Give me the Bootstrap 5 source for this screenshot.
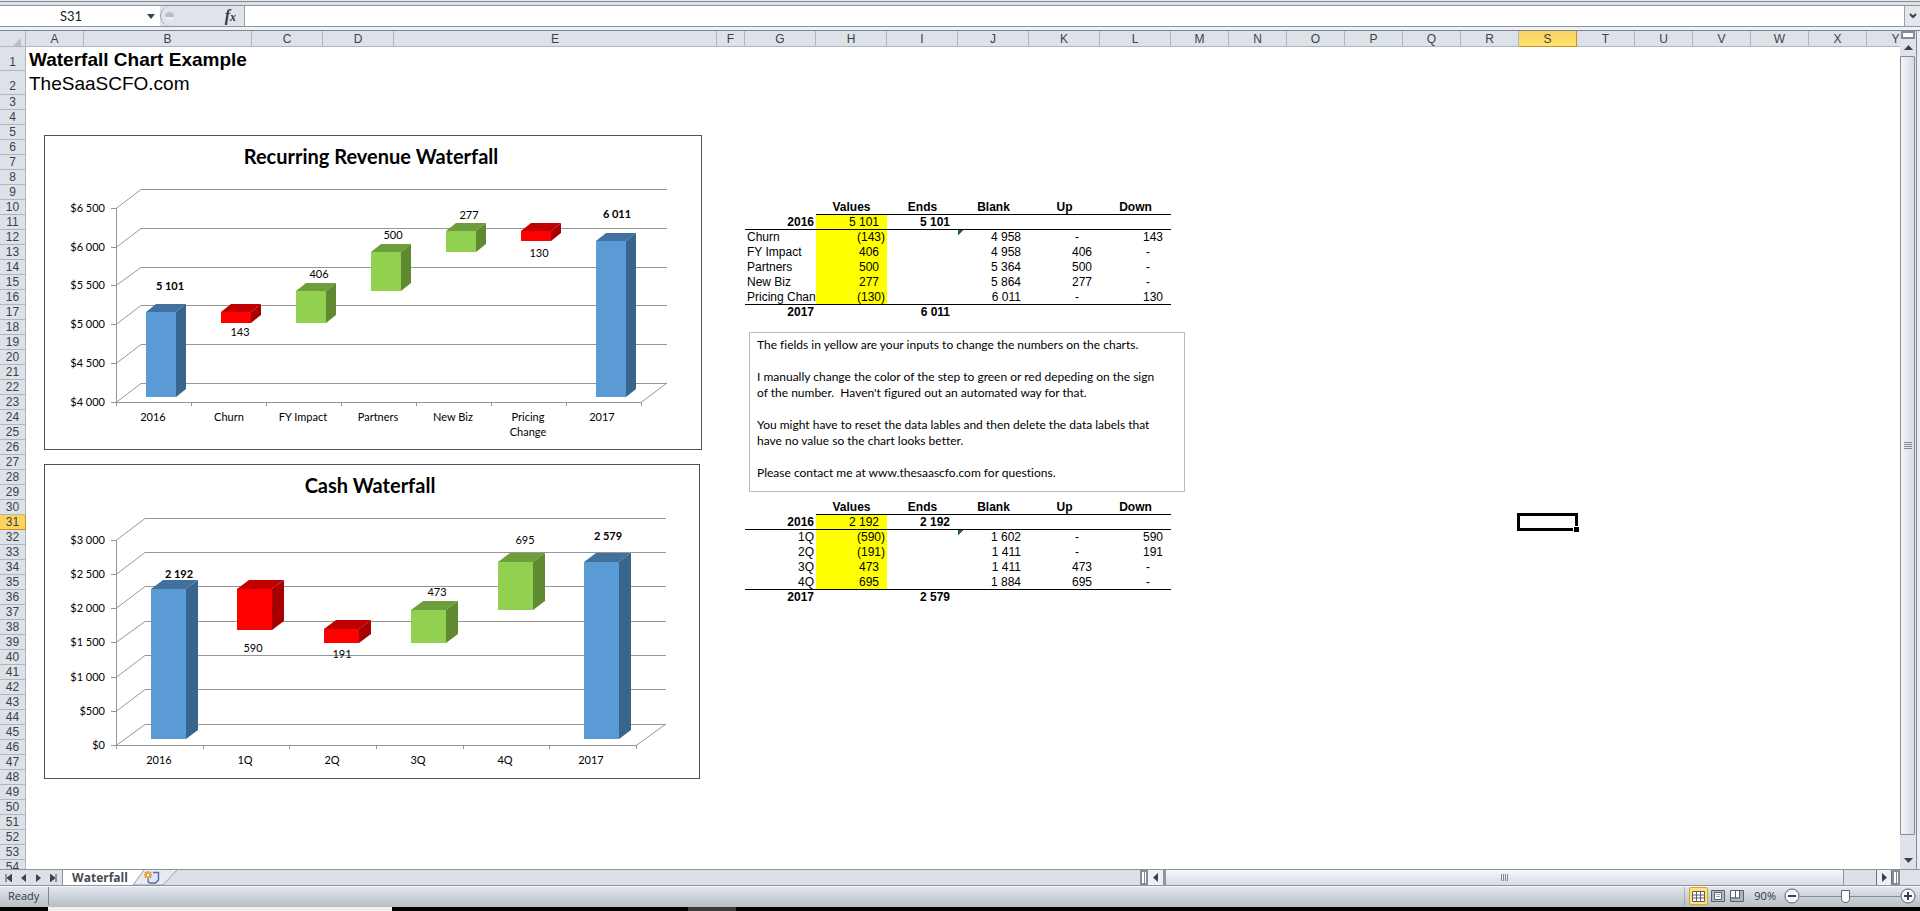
<!DOCTYPE html>
<html lang="en">
<head>
<meta charset="utf-8">
<meta name="viewport" content="width=device-width, initial-scale=1">
<title>Waterfall Chart Example</title>
<link href="https://cdn.jsdelivr.net/npm/bootstrap@5.3.0/dist/css/bootstrap.min.css" rel="stylesheet">
<style>
:root { --chrome: #dde1e8; --edge: #8d949d; --rule: #b0b6be; --ink: #3c4248; }
body { font-family: "Liberation Sans", Arial, sans-serif; font-size: 12px; line-height: 15px; color: #000; background: #fff; }
button { border: 0; padding: 0; background: none; line-height: 0; }
svg { display: block; }

/* formula bar */
.ribbon-edge { height: 6px; background: #dce0e3; border-bottom: 1px solid var(--edge); }
.ribbon-edge::before { content: ""; display: block; height: 2px; border-bottom: 1px solid #858c92; background: #e3e8ea; }
.formula-bar { height: 20px; background: var(--chrome); }
.name-wrap { width: 160px; background: #fff; }
.name-input, .formula-input { border: 0; background: #fff; height: 20px; outline: 0; font-family: Lato, sans-serif; font-size: 13px; color: #222; }
.name-input { width: 142px; text-align: center; }
.fx-cap { width: 85px; border: 1px solid #9aa1aa; border-width: 0 1px 0 1px; border-radius: 10px 0 0 10px; background: #dfe3ea; }
.fx-dot { width: 9px; height: 9px; border-radius: 50%; background: linear-gradient(#b9bec4 50%, #e9ecef 50%); }
.fx-label { font: italic bold 16px/18px "Liberation Serif", serif; color: #33383d; }
.fx-label small { font-size: 12px; }
.expand-btn { width: 16px; background: #e3e7ec; border-left: 1px solid #9aa1aa; }
.bar-gap { height: 5px; background: #eef1f5; border-top: 1px solid var(--edge); border-bottom: 1px solid #7c848e; }

/* sheet */
.sheet-area { overflow: hidden; min-height: 0; }
.sheet-view { overflow: hidden; min-width: 0; background: #fff; }
.sheet-grid { table-layout: fixed; border-collapse: separate; border-spacing: 0; width: 1925px; }
.sheet-grid th, .sheet-grid td { height: 15px; padding: 0 2px; line-height: 14px; white-space: nowrap; vertical-align: bottom; font-weight: 400; }
.sheet-grid td { border-bottom: 1px solid transparent; }
.sheet-grid thead th { height: 16px; line-height: 14px; text-align: center; background: var(--chrome); border-right: 1px solid var(--rule); border-bottom: 1px solid var(--rule); color: var(--ink); padding: 0; }
.sheet-grid tbody th { text-align: center; background: var(--chrome); border-right: 1px solid var(--rule); border-bottom: 1px solid var(--rule); color: var(--ink); padding: 0; }
.sheet-grid tr.tall > * { height: 24px; line-height: 20px; font-size: 19px; padding-left: 3px; }
.sheet-grid tr.tall > th { line-height: 16px; font-size: 12px; padding: 0; }
.sheet-grid thead th.picked { background: linear-gradient(#fbd261, #ffe56f); border-color: #c98f2a; }
.sheet-grid tbody th.picked { background: #fcd45c; border-color: #c98f2a; }
.sheet-grid td.hd { font-weight: 700; text-align: center; }
.sheet-grid td.b { font-weight: 700; }
.sheet-grid td.e { text-align: right; }
.sheet-grid td.n { text-align: right; padding-right: 8px; }
.sheet-grid td.dash { text-align: right; padding-right: 21px; }
.sheet-grid td.clip { overflow: hidden; }
.sheet-grid td.y { background: #ff0; }
.sheet-grid td.u { border-bottom-color: #000; }
.sheet-grid td.flag { background: linear-gradient(135deg, #1c6a2c 4px, transparent 4px) no-repeat; }

/* floating objects on the sheet */
.float-obj { position: absolute; background: #fff; }
.chart-one { left: 44px; top: 104px; }
.chart-two { left: 44px; top: 433px; }
.note-box { left: 749px; top: 301px; width: 436px; height: 160px; border: 1px solid #b9bcbf; padding: 4px 7px; font: 12px/16px Lato, sans-serif; font-variant-ligatures: none; white-space: pre; }
.cell-cursor { left: 1517px; top: 482px; width: 61px; height: 18px; border: 3px solid #000; background: transparent; }
.cell-cursor::after { content: ""; position: absolute; right: -5px; bottom: -5px; width: 7px; height: 7px; background: #000; border: 1px solid #fff; }
.chart text { font-family: Lato, sans-serif; font-size: 11px; fill: #000; }
.chart text.ttl { font-size: 20px; font-weight: 700; font-variant-ligatures: none; }
.chart text.strong { font-weight: 700; }

/* scroll bars */
.vscroll { width: 16px; background: #dfe3e9; }
.vscroll .split { height: 8px; margin: 0 1px; border: 2px solid #858c95; background: #fff; }
.vscroll .arrow { height: 17px; }
.vscroll .thumb { width: 15px; margin-bottom: 17px; border: 1px solid #848b94; border-radius: 1px; background: linear-gradient(90deg, #f4f6f9, #d5dae4); }
.win-edge { width: 4px; background: #e9ecf1; border-left: 1px solid #848b94; }
.tab-bar { height: 17px; background: #dce1e7; border-top: 1px solid #8d949b; border-bottom: 1px solid #8d939a; }
.tab-nav { width: 63px; border-right: 1px solid var(--edge); }
.tab-name { height: 15px; width: 70px; padding-left: 4px; background: #fff; color: #464b54; font: 700 12px/15px "Open Sans", sans-serif; text-align: center; }
.hs-btn { width: 16px; background: #eceff4; border-right: 1px solid var(--edge); }
.hs-split { width: 8px; border: 2px solid #858c95; background: linear-gradient(90deg, #fff 2px, #858c95 2px, #858c95 3px, #fff 3px); }
.hs-track { width: 712px; }
.hs-thumb { width: 680px; border: 1px solid #8d949b; border-width: 0 1px 0 2px; background: linear-gradient(#f4f6fa, #d8dde4); }
.hs-corner { width: 20px; background: #dfe3e9; }

/* status bar */
.status-bar { height: 21px; padding-bottom: 2px; border-top: 1px solid #f6f8fa; background: linear-gradient(#e2e6ee, #ccd2da 50%, #b8bfc2); color: #33383d; font: 11px/18px "Open Sans", sans-serif; }
.status-ready { width: 49px; border-right: 1px solid #7e858c; }
.view-btn { width: 19px; height: 18px; border-radius: 2px; }
.view-btn.on { background: #fde27e; border: 1px solid #d6a52c; }
.zoom-range { appearance: none; -webkit-appearance: none; width: 100px; height: 16px; margin: 0; background: linear-gradient(#848b93, #848b93) center / 100% 1px no-repeat; }
.zoom-range::-webkit-slider-thumb { -webkit-appearance: none; width: 9px; height: 13px; background: #fff; border: 1px solid #5c636b; border-radius: 1px 1px 5px 5px; }
.taskbar { height: 4px; background: #000; }
.task-a { width: 344px; margin-left: 48px; background: #efefef; }
.task-b { width: 48px; margin-left: 296px; background: #3b3b3b; }
</style>
</head>
<body class="vh-100 d-flex flex-column overflow-hidden">

<header>
  <div class="ribbon-edge"></div>
  <div class="formula-bar d-flex">
    <div class="name-wrap d-flex align-items-center">
      <input class="name-input p-0" type="text" value="S31" aria-label="Name box">
      <button type="button" class="flex-grow-1 d-flex justify-content-center" aria-label="Open name list"><svg width="8" height="5"><path d="M0 0h8L4 5z" fill="#3c4248"/></svg></button>
    </div>
    <div class="fx-cap d-flex align-items-center justify-content-between px-1">
      <span class="fx-dot"></span>
      <button type="button" class="fx-label pe-1" aria-label="Insert function">f<small>x</small></button>
    </div>
    <input class="formula-input flex-grow-1 p-0" type="text" aria-label="Formula">
    <button type="button" class="expand-btn d-flex align-items-center justify-content-center" aria-label="Expand formula bar"><svg width="8" height="6"><path d="M1 1l3 3 3-3" fill="none" stroke="#3c4248" stroke-width="2"/></svg></button>
  </div>
  <div class="bar-gap"></div>
</header>

<main class="sheet-area d-flex flex-grow-1">
  <div class="sheet-view position-relative flex-grow-1">
    <table class="sheet-grid" id="grid" aria-label="Waterfall"></table>
    <div class="float-obj chart-one"><svg class="chart" id="revenue" width="658" height="315" viewBox="44 135 658 315" role="img" aria-label="Recurring Revenue Waterfall"></svg></div>
    <div class="float-obj chart-two"><svg class="chart" id="cash" width="656" height="315" viewBox="44 464 656 315" role="img" aria-label="Cash Waterfall"></svg></div>
    <div class="float-obj note-box">The fields in yellow are your inputs to change the numbers on the charts.

I manually change the color of the step to green or red depeding on the sign
of the number.  Haven't figured out an automated way for that.

You might have to reset the data lables and then delete the data labels that
have no value so the chart looks better.

Please contact me at www.thesaascfo.com for questions.</div>
    <div class="float-obj cell-cursor"></div>
  </div>
  <div class="vscroll d-flex flex-column">
    <div class="split"></div>
    <button type="button" class="arrow d-flex align-items-center justify-content-center" aria-label="Scroll up"><svg width="9" height="5"><path d="M0 5h9L4.500 0z" fill="#3c4248"/></svg></button>
    <div class="thumb flex-grow-1 d-flex align-items-center justify-content-center"><svg width="8" height="8"><path d="M0 .5h8M0 2.500h8M0 4.500h8M0 6.500h8" stroke="#848b94"/></svg></div>
    <button type="button" class="arrow d-flex align-items-center justify-content-center" aria-label="Scroll down"><svg width="9" height="5"><path d="M0 0h9L4.500 5z" fill="#3c4248"/></svg></button>
  </div>
  <div class="win-edge"></div>
</main>

<footer>
  <div class="tab-bar d-flex">
    <div class="tab-nav d-flex align-items-center justify-content-around">
      <button type="button" aria-label="First sheet"><svg width="7" height="8"><path d="M1 0v8M7 0v8L2 4z" fill="#3c4248" stroke="#3c4248" stroke-width="1"/></svg></button>
      <button type="button" aria-label="Previous sheet"><svg width="5" height="8"><path d="M5 0v8L0 4z" fill="#3c4248"/></svg></button>
      <button type="button" aria-label="Next sheet"><svg width="5" height="8"><path d="M0 0v8l5-4z" fill="#3c4248"/></svg></button>
      <button type="button" aria-label="Last sheet"><svg width="7" height="8"><path d="M6 0v8M0 0v8l5-4z" fill="#3c4248" stroke="#3c4248" stroke-width="1"/></svg></button>
    </div>
    <button type="button" class="tab-name">Waterfall</button>
    <button type="button" aria-label="Insert worksheet"><svg width="46" height="15"><path d="M0 0h12L2 12l-2 3z" fill="#fff"/><path d="M0 15L11 0h33L30 15z" fill="#e7ebf0"/><path d="M-3 15h3L11 0M44 0L30 15H0" fill="none" stroke="#979fa8"/><path d="M16 3h9v7l-3 3h-5q-3-1-2-4z" fill="#dfe7fa"/><path d="M20 2.500h5.500v7.500l-3 3H17q-3-1-1.500-4" fill="none" stroke="#5a6ca0" stroke-width="1.500"/><path d="M15 1v8M11 5h8M12 2l6 6M18 2l-6 6" stroke="#d98d25" stroke-width="1.500"/><circle cx="15" cy="5" r="1.500" fill="#fff6c8"/></svg></button>
    <div class="flex-grow-1"></div>
    <div class="hs-split"></div>
    <button type="button" class="hs-btn d-flex align-items-center justify-content-center" aria-label="Scroll left"><svg width="5" height="9"><path d="M5 0v9L0 4.500z" fill="#3c4248"/></svg></button>
    <div class="hs-track d-flex">
      <div class="hs-thumb d-flex align-items-center justify-content-center"><svg width="8" height="7"><path d="M.5 0v7M2.500 0v7M4.500 0v7M6.500 0v7" stroke="#848b94"/></svg></div>
    </div>
    <button type="button" class="hs-btn border-start border-secondary d-flex align-items-center justify-content-center" aria-label="Scroll right"><svg width="5" height="9"><path d="M0 0v9l5-4.500z" fill="#3c4248"/></svg></button>
    <div class="hs-split"></div>
    <div class="hs-corner"></div>
  </div>
  <div class="status-bar d-flex align-items-center">
    <div class="status-ready ps-2">Ready</div>
    <div class="flex-grow-1"></div>
    <div class="vr me-1"></div>
    <button type="button" class="view-btn on d-flex align-items-center justify-content-center" aria-label="Normal view"><svg width="13" height="11"><path d="M.5.5h12v10H.5zM0 4h13M0 7h13M4.500 0v11M8.500 0v11" fill="#fff" stroke="#59606a"/></svg></button>
    <button type="button" class="view-btn d-flex align-items-center justify-content-center" aria-label="Page layout view"><svg width="14" height="12"><path d="M.5.5h13v11H.5z" fill="#b4bac1" stroke="#59606a"/><path d="M3.500 2.500h7v7h-7z" fill="#fff" stroke="#59606a"/><path d="M5 4.500h4M5 6.500h4" stroke="#9aa1aa"/></svg></button>
    <button type="button" class="view-btn d-flex align-items-center justify-content-center" aria-label="Page break preview"><svg width="14" height="12"><path d="M.5.5h13v11H.5z" fill="#adb3ba" stroke="#59606a"/><path d="M1 1h4v6H1zM6 1h3v6H6z" fill="#fff"/><path d="M5.500 0v8H0M9.500 0v8h-4" fill="none" stroke="#59606a"/></svg></button>
    <span class="ms-2 me-2">90%</span>
    <button type="button" aria-label="Zoom out"><svg width="16" height="16"><circle cx="8" cy="8" r="7" fill="#f6f7f9" stroke="#59606a"/><path d="M4 8h8" stroke="#3c4248" stroke-width="2"/></svg></button>
    <input class="zoom-range" type="range" min="10" max="190" value="91" aria-label="Zoom">
    <button type="button" class="me-1" aria-label="Zoom in"><svg width="16" height="16"><circle cx="8" cy="8" r="7" fill="#f6f7f9" stroke="#59606a"/><path d="M4 8h8M8 4v8" stroke="#3c4248" stroke-width="2"/></svg></button>
  </div>
  <div class="taskbar d-flex"><div class="task-a"></div><div class="task-b"></div></div>
</footer>

<script src="https://cdn.jsdelivr.net/npm/bootstrap@5.3.0/dist/js/bootstrap.bundle.min.js"></script>
<script>
// Column widths A..Y
const widths = [58, 168, 71, 71, 323, 28, 71, 71, 71, 71, 71, 71].concat(Array(13).fill(58));
const cells = { A1: ['Waterfall Chart Example', 'b'], A2: ['TheSaaSCFO.com', ''] };

// A block of figures: heading row, opening total, steps, closing total
function block(top, open, steps, close, labelClass) {
  ['Values', 'Ends', 'Blank', 'Up', 'Down'].forEach((t, i) => cells['HIJKL'[i] + top] = [t, 'hd u']);
  cells['G' + (top + 1)] = ['2016', 'b e u'];
  cells['H' + (top + 1)] = [open, 'n y u'];
  cells['I' + (top + 1)] = [open, 'n b u'];
  for (const c of 'JKL') cells[c + (top + 1)] = ['', 'u'];
  steps.forEach((s, i) => {
    const r = top + 2 + i, u = i === steps.length - 1 ? ' u' : '';
    cells['G' + r] = [s[0], labelClass + u];
    cells['H' + r] = [s[1], (s[1][0] === '(' ? 'e y' : 'n y') + u];
    cells['I' + r] = ['', u];
    cells['J' + r] = [s[2], 'n' + (i ? '' : ' flag') + u];
    cells['K' + r] = [s[3], (s[3] === '-' ? 'dash' : 'n') + u];
    cells['L' + r] = [s[4], (s[4] === '-' ? 'dash' : 'n') + u];
  });
  const end = top + 2 + steps.length;
  cells['G' + end] = ['2017', 'b e'];
  cells['I' + end] = [close, 'n b'];
}
block(10, '5 101', [
  ['Churn', '(143)', '4 958', '-', '143'],
  ['FY Impact', '406', '4 958', '406', '-'],
  ['Partners', '500', '5 364', '500', '-'],
  ['New Biz', '277', '5 864', '277', '-'],
  ['Pricing Change', '(130)', '6 011', '-', '130']], '6 011', 'clip');
block(30, '2 192', [
  ['1Q', '(590)', '1 602', '-', '590'],
  ['2Q', '(191)', '1 411', '-', '191'],
  ['3Q', '473', '1 411', '473', '-'],
  ['4Q', '695', '1 884', '695', '-']], '2 579', 'e');

const letters = 'ABCDEFGHIJKLMNOPQRSTUVWXY'.split('');
let html = '<colgroup><col style="width:26px">' + widths.map(w => `<col style="width:${w}px">`).join('') + '</colgroup>';
html += '<thead><tr><th><svg width="8" height="8" class="ms-auto me-1"><path d="M8 0v8H0z" fill="#b9bec6"/></svg></th>' +
  letters.map(l => `<th scope="col"${l === 'S' ? ' class="picked"' : ''}>${l}</th>`).join('') + '</tr></thead><tbody>';
for (let r = 1; r <= 54; r++) {
  html += `<tr${r < 3 ? ' class="tall"' : ''}><th scope="row"${r === 31 ? ' class="picked"' : ''}>${r}</th>` +
    letters.map(l => { const c = cells[l + r]; return c ? `<td class="${c[1].trim()}">${c[0]}</td>` : '<td></td>'; }).join('') + '</tr>';
}
document.getElementById('grid').innerHTML = html + '</tbody>';

// 3-D column chart
const tones = {
  blue: ['#5b9bd5', '#41719c', '#38658c'],
  red: ['#ff0000', '#c00000', '#a60000'],
  green: ['#92d050', '#6e9d3b', '#5f8a31']
};
function chart(id, o) {
  const text = (x, y, t, a, c) => `<text x="${x}" y="${y + 4}" text-anchor="${a}" class="${c || ''}">${t}</text>`;
  const [bx, by, bw, bh] = o.box;
  let s = `<rect x="${bx}.5" y="${by}.5" width="${bw - 1}" height="${bh - 1}" fill="#fff" stroke="#4c5257"/>`;
  s += `<text x="${o.title[0]}" y="${o.title[1]}" text-anchor="middle" class="ttl">${o.title[2]}</text>`;
  o.axis.forEach((a, i) => {
    const f = a[1], b = a[2];
    s += `<path d="M${o.left - 5} ${f}.5H${o.left}L${o.back} ${b}.5H${o.backRight}" fill="none" stroke="#969696"/>` + text(105, f, a[0], 'end');
  });
  const base = o.axis[o.axis.length - 1];
  s += `<path d="M${o.left}.5 ${o.axis[0][1]}V${base[1] + 4}M${o.left} ${base[1]}.5H${o.right}L${o.backRight} ${base[2]}" fill="none" stroke="#969696"/>`;
  const n = o.bars.length;
  for (let i = 1; i <= n; i++) {
    const x = Math.round(o.left + (o.right - o.left) * i / n);
    s += `<path d="M${x}.5 ${base[1]}v4" stroke="#969696"/>`;
  }
  for (const [x, top, bottom, tone, label, lx, ly, cat, cx] of o.bars) {
    const [front, lid, side] = tones[tone], [w, dx, dy] = o.size, r = x + w;
    s += `<path d="M${x} ${top}l${dx} -${dy}h${w}L${r} ${top}z" fill="${lid}"/>` +
      `<path d="M${r} ${top}l${dx} -${dy}V${bottom - dy}L${r} ${bottom}z" fill="${side}"/>` +
      `<rect x="${x}" y="${top}" width="${w}" height="${bottom - top}" fill="${front}"/>` +
      text(lx, ly, label, 'middle', tone === 'blue' ? 'strong' : '');
    cat.split('|').forEach((line, k) => s += text(cx, o.catY + 15 * k, line, 'middle'));
  }
  document.getElementById(id).innerHTML = s;
}
chart('revenue', {
  box: [44, 135, 658, 315], title: [371, 164, 'Recurring Revenue Waterfall'],
  left: 116, right: 641, back: 141, backRight: 667, size: [30, 10, 8], catY: 417,
  axis: [['$6 500', 208, 189], ['$6 000', 247, 228], ['$5 500', 285, 267], ['$5 000', 324, 305], ['$4 500', 363, 344], ['$4 000', 402, 383]],
  bars: [
    [146, 312, 397, 'blue', '5 101', 170, 286, '2016', 153],
    [221, 312, 323, 'red', '143', 240, 332, 'Churn', 229],
    [296, 291, 323, 'green', '406', 319, 274, 'FY Impact', 303],
    [371, 252, 291, 'green', '500', 393, 235, 'Partners', 378],
    [446, 231, 252, 'green', '277', 469, 215, 'New Biz', 453],
    [521, 231, 241, 'red', '130', 539, 253, 'Pricing|Change', 528],
    [596, 241, 397, 'blue', '6 011', 617, 214, '2017', 602]]
});
chart('cash', {
  box: [44, 464, 656, 315], title: [370, 493, 'Cash Waterfall'],
  left: 116, right: 636, back: 145, backRight: 666, size: [35, 12, 9], catY: 760,
  axis: [['$3 000', 540, 518], ['$2 500', 574, 552], ['$2 000', 608, 586], ['$1 500', 642, 621], ['$1 000', 677, 655], ['$500', 711, 689], ['$0', 745, 724]],
  bars: [
    [151, 589, 739, 'blue', '2 192', 179, 574, '2016', 159],
    [237, 589, 630, 'red', '590', 253, 648, '1Q', 245],
    [324, 629, 643, 'red', '191', 342, 654, '2Q', 332],
    [411, 610, 643, 'green', '473', 437, 592, '3Q', 418],
    [498, 562, 610, 'green', '695', 525, 540, '4Q', 505],
    [584, 562, 739, 'blue', '2 579', 608, 536, '2017', 591]]
});
</script>
</body>
</html>
